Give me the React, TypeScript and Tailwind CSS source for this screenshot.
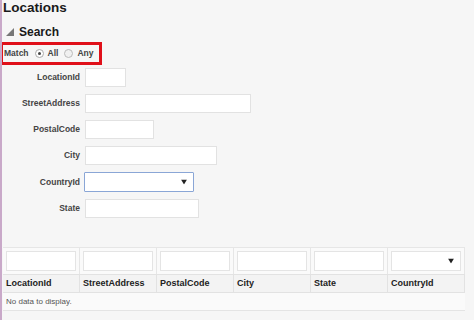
import React from 'react';

const fields = [
  { label: 'LocationId', w: 'w-[41px]' },
  { label: 'StreetAddress', w: 'w-[166px]' },
  { label: 'PostalCode', w: 'w-[69px]' },
  { label: 'City', w: 'w-[132px]' },
  { label: 'CountryId', w: 'w-[110px]', select: true },
  { label: 'State', w: 'w-[114px]' },
];

const columns = ['LocationId', 'StreetAddress', 'PostalCode', 'City', 'State', 'CountryId'];

const Caret = () => (
  <svg width="6" height="5" viewBox="0 0 6 5" className="absolute right-[6px] top-1/2 -translate-y-1/2">
    <path d="M0 0 L6 0 L3 5 Z" fill="#222" />
  </svg>
);

const App: React.FC = () => {
  return (
    <div
      className="w-[474px] h-[320px] overflow-hidden bg-[#f6f6f6] border-l-2 border-[#c9a9c9] text-[#333]"
      style={{ fontFamily: '"Liberation Sans", Arial, sans-serif' }}
    >
      {/* page title */}
      <h1 className="text-[13.5px] font-bold leading-[16px] pl-[1px] text-[#1a1a1a]">Locations</h1>

      {/* search header */}
      <div className="flex items-center gap-[5px] mt-[9px] pl-[4px]">
        <svg width="8" height="8" viewBox="0 0 8 8">
          <path d="M8 0 L8 8 L0 8 Z" fill="#777" />
        </svg>
        <span className="text-[12px] font-bold leading-[14px] text-[#1a1a1a]">Search</span>
      </div>

      {/* match radios */}
      <div className="mt-[3px] -ml-[2px] w-[102px] h-[23px] border-[3px] border-[#e0101a] flex items-center gap-[4px] pl-[1px] text-[8.5px] font-bold text-[#444]">
        <span>Match</span>
        <span className="w-[9px] h-[9px] rounded-full border border-[#aaa] bg-white flex items-center justify-center ml-[2px]">
          <span className="w-[3px] h-[3px] rounded-full bg-[#444]" />
        </span>
        <span>All</span>
        <span className="w-[9px] h-[9px] rounded-full border border-[#bbb] bg-[#f0f0f0] ml-[2px]" />
        <span>Any</span>
      </div>

      {/* form */}
      <div className="flex flex-col gap-[7px] mt-[3px]">
        {fields.map((f) => (
          <div key={f.label} className="flex items-center">
            <span className="w-[83px] text-right text-[8.5px] font-bold text-[#444] pr-[5px]">{f.label}</span>
            {f.select ? (
              <div className={`relative ${f.w} h-[20px] bg-white border border-[#8aa6d6] rounded-[1px] -ml-[1px]`}>
                <Caret />
              </div>
            ) : (
              <div className={`${f.w} h-[19px] bg-white border border-[#e2e2e2]`} />
            )}
          </div>
        ))}
      </div>

      {/* table */}
      <div className="mt-[29px] ml-[1px] w-[462px] bg-[#fafafa] border-b border-[#e4e4e4]">
        <div className="grid grid-cols-6 border-t border-[#e6e6e6]">
          {columns.map((c, i) => (
            <div key={c} className="border-r border-[#e6e6e6] px-[3px] py-[3px]">
              <div className="relative h-[20px] bg-white border border-[#e4e4e4]">
                {i === 5 && <Caret />}
              </div>
            </div>
          ))}
        </div>
        <div className="grid grid-cols-6 bg-[#f3f3f3] border-t border-b border-[#e2e2e2]">
          {columns.map((c) => (
            <div key={c} className="border-r border-[#e2e2e2] h-[17px] flex items-center px-[3px] text-[9px] font-bold text-[#222]">
              {c}
            </div>
          ))}
        </div>
        <div className="h-[17px] flex items-center px-[3px] text-[8px] text-[#555]">No data to display.</div>
      </div>
    </div>
  );
};

export default App;
